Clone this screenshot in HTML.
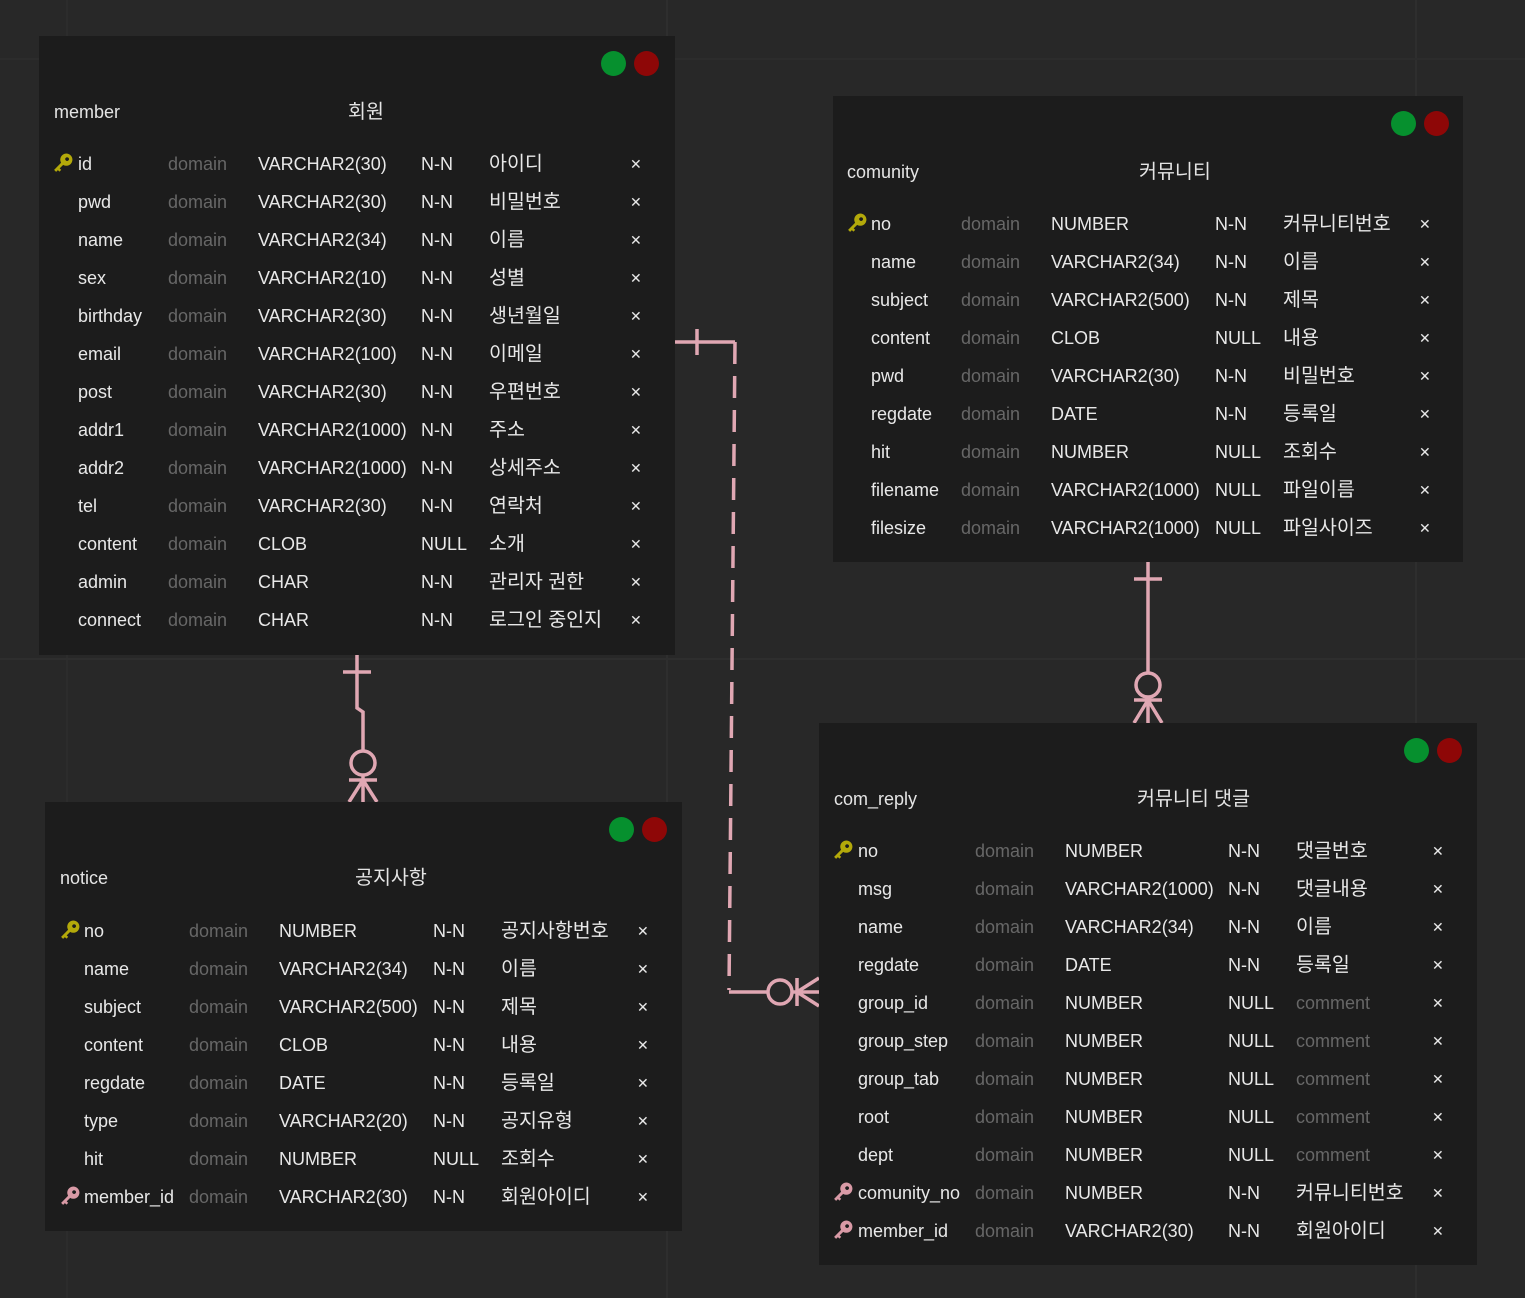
<!DOCTYPE html>
<html><head><meta charset="utf-8"><style>
body{margin:0;width:1525px;height:1298px;overflow:hidden;background:#282828;font-family:"Liberation Sans","Noto Sans CJK KR",sans-serif;position:relative}
.gv{position:absolute;top:0;bottom:0;width:2px;background:#2e2e2e}
.gh{position:absolute;left:0;right:0;height:2px;background:#2e2e2e}
.t{position:absolute;background:#1c1c1c}
.d{position:absolute;top:15px;width:25px;height:25px;border-radius:50%}
.g{background:#06902e}.rd{background:#8e0707}
.tn{position:absolute;top:65px;font-size:18px;color:#e4e4e4;line-height:22px}
.tk{font-size:19.5px}
.r{position:absolute;left:0;right:0;height:22px;font-size:18px;line-height:22px;color:#e8e8e8;white-space:nowrap}
.r span{position:absolute;top:1px}
.c2{color:#676767}
.c5{font-size:19.5px}
.c5.p{color:#676767;font-size:18px}
.c6{font-size:14px}
.k{top:1px!important;width:20px;height:20px}
.m .c0{left:14px}.m .c1{left:39px}.m .c2{left:129px}.m .c3{left:219px}.m .c4{left:382px}.m .c5{left:450px}.m .c6{left:591px}
.cm .c0{left:14px}.cm .c1{left:38px}.cm .c2{left:128px}.cm .c3{left:218px}.cm .c4{left:382px}.cm .c5{left:450px}.cm .c6{left:586px}
.n .c0{left:15px}.n .c1{left:39px}.n .c2{left:144px}.n .c3{left:234px}.n .c4{left:388px}.n .c5{left:456px}.n .c6{left:592px}
.cr .c0{left:14px}.cr .c1{left:39px}.cr .c2{left:156px}.cr .c3{left:246px}.cr .c4{left:409px}.cr .c5{left:477px}.cr .c6{left:613px}
</style></head><body>
<div class="gv" style="left:66px;background:#2c2c2c"></div>
<div class="gv" style="left:666px"></div>
<div class="gv" style="left:1415px"></div>
<div class="gh" style="top:58px;background:#2c2c2c"></div>
<div class="gh" style="top:658px"></div>
<svg width="0" height="0" style="position:absolute"><defs>
<symbol id="key" viewBox="0 0 18 18"><path d="M12 0.5a5.5 5.5 0 1 0 0.01 0zM12.7 3.8a1.7 1.7 0 1 1 -0.01 0z" fill-rule="evenodd"/><path d="M8.3 7.8 L1 15.2 L2.8 17 L4.4 15.4 L5.8 16.8 L7.4 15.2 L6 13.8 L10.2 9.7Z"/></symbol>
</defs></svg>

<svg style="position:absolute;left:0;top:0" width="1525" height="1298">
<g stroke="#e0a7b3" stroke-width="3.5" fill="none">
<path d="M675 342H735"/><path d="M697 329V355"/>
<path d="M735 342L729 990" stroke-dasharray="22 12"/>
<path d="M729 992H768"/>
<circle cx="780" cy="992" r="12"/>
<path d="M797 978V1006M792 992H819M797 992L819 978M797 992L819 1006"/>
<path d="M357 655V708L363 712V751"/><path d="M343 672H371"/>
<circle cx="363" cy="763" r="12"/>
<path d="M349 780H377M363 775V802M363 780L349 802M363 780L377 802"/>
<path d="M1148 562V673"/><path d="M1134 579H1162"/>
<circle cx="1148" cy="685" r="12"/>
<path d="M1134 700H1162M1148 697V723M1148 700L1134 723M1148 700L1162 723"/>
</g></svg>

<div class="t m" style="left:39px;top:36px;width:636px;height:619px">
<div class="d g" style="left:562px"></div><div class="d rd" style="left:595px"></div>
<div class="tn" style="left:15px">member</div><div class="tn tk" style="left:309px">회원</div>
<div class="r" style="top:116px"><svg class="k c0" style="position:absolute;fill:#b3a90a"><use href="#key"/></svg><span class="c1">id</span><span class="c2">domain</span><span class="c3">VARCHAR2(30)</span><span class="c4">N-N</span><span class="c5">아이디</span><span class="c6">✕</span></div>
<div class="r" style="top:154px"><span class="c1">pwd</span><span class="c2">domain</span><span class="c3">VARCHAR2(30)</span><span class="c4">N-N</span><span class="c5">비밀번호</span><span class="c6">✕</span></div>
<div class="r" style="top:192px"><span class="c1">name</span><span class="c2">domain</span><span class="c3">VARCHAR2(34)</span><span class="c4">N-N</span><span class="c5">이름</span><span class="c6">✕</span></div>
<div class="r" style="top:230px"><span class="c1">sex</span><span class="c2">domain</span><span class="c3">VARCHAR2(10)</span><span class="c4">N-N</span><span class="c5">성별</span><span class="c6">✕</span></div>
<div class="r" style="top:268px"><span class="c1">birthday</span><span class="c2">domain</span><span class="c3">VARCHAR2(30)</span><span class="c4">N-N</span><span class="c5">생년월일</span><span class="c6">✕</span></div>
<div class="r" style="top:306px"><span class="c1">email</span><span class="c2">domain</span><span class="c3">VARCHAR2(100)</span><span class="c4">N-N</span><span class="c5">이메일</span><span class="c6">✕</span></div>
<div class="r" style="top:344px"><span class="c1">post</span><span class="c2">domain</span><span class="c3">VARCHAR2(30)</span><span class="c4">N-N</span><span class="c5">우편번호</span><span class="c6">✕</span></div>
<div class="r" style="top:382px"><span class="c1">addr1</span><span class="c2">domain</span><span class="c3">VARCHAR2(1000)</span><span class="c4">N-N</span><span class="c5">주소</span><span class="c6">✕</span></div>
<div class="r" style="top:420px"><span class="c1">addr2</span><span class="c2">domain</span><span class="c3">VARCHAR2(1000)</span><span class="c4">N-N</span><span class="c5">상세주소</span><span class="c6">✕</span></div>
<div class="r" style="top:458px"><span class="c1">tel</span><span class="c2">domain</span><span class="c3">VARCHAR2(30)</span><span class="c4">N-N</span><span class="c5">연락처</span><span class="c6">✕</span></div>
<div class="r" style="top:496px"><span class="c1">content</span><span class="c2">domain</span><span class="c3">CLOB</span><span class="c4">NULL</span><span class="c5">소개</span><span class="c6">✕</span></div>
<div class="r" style="top:534px"><span class="c1">admin</span><span class="c2">domain</span><span class="c3">CHAR</span><span class="c4">N-N</span><span class="c5">관리자 권한</span><span class="c6">✕</span></div>
<div class="r" style="top:572px"><span class="c1">connect</span><span class="c2">domain</span><span class="c3">CHAR</span><span class="c4">N-N</span><span class="c5">로그인 중인지</span><span class="c6">✕</span></div>
</div>

<div class="t cm" style="left:833px;top:96px;width:630px;height:466px">
<div class="d g" style="left:558px"></div><div class="d rd" style="left:591px"></div>
<div class="tn" style="left:14px">comunity</div><div class="tn tk" style="left:306px">커뮤니티</div>
<div class="r" style="top:116px"><svg class="k c0" style="position:absolute;fill:#b3a90a"><use href="#key"/></svg><span class="c1">no</span><span class="c2">domain</span><span class="c3">NUMBER</span><span class="c4">N-N</span><span class="c5">커뮤니티번호</span><span class="c6">✕</span></div>
<div class="r" style="top:154px"><span class="c1">name</span><span class="c2">domain</span><span class="c3">VARCHAR2(34)</span><span class="c4">N-N</span><span class="c5">이름</span><span class="c6">✕</span></div>
<div class="r" style="top:192px"><span class="c1">subject</span><span class="c2">domain</span><span class="c3">VARCHAR2(500)</span><span class="c4">N-N</span><span class="c5">제목</span><span class="c6">✕</span></div>
<div class="r" style="top:230px"><span class="c1">content</span><span class="c2">domain</span><span class="c3">CLOB</span><span class="c4">NULL</span><span class="c5">내용</span><span class="c6">✕</span></div>
<div class="r" style="top:268px"><span class="c1">pwd</span><span class="c2">domain</span><span class="c3">VARCHAR2(30)</span><span class="c4">N-N</span><span class="c5">비밀번호</span><span class="c6">✕</span></div>
<div class="r" style="top:306px"><span class="c1">regdate</span><span class="c2">domain</span><span class="c3">DATE</span><span class="c4">N-N</span><span class="c5">등록일</span><span class="c6">✕</span></div>
<div class="r" style="top:344px"><span class="c1">hit</span><span class="c2">domain</span><span class="c3">NUMBER</span><span class="c4">NULL</span><span class="c5">조회수</span><span class="c6">✕</span></div>
<div class="r" style="top:382px"><span class="c1">filename</span><span class="c2">domain</span><span class="c3">VARCHAR2(1000)</span><span class="c4">NULL</span><span class="c5">파일이름</span><span class="c6">✕</span></div>
<div class="r" style="top:420px"><span class="c1">filesize</span><span class="c2">domain</span><span class="c3">VARCHAR2(1000)</span><span class="c4">NULL</span><span class="c5">파일사이즈</span><span class="c6">✕</span></div>
</div>

<div class="t n" style="left:45px;top:802px;width:637px;height:429px">
<div class="d g" style="left:564px"></div><div class="d rd" style="left:597px"></div>
<div class="tn" style="left:15px">notice</div><div class="tn tk" style="left:310px">공지사항</div>
<div class="r" style="top:117px"><svg class="k c0" style="position:absolute;fill:#b3a90a"><use href="#key"/></svg><span class="c1">no</span><span class="c2">domain</span><span class="c3">NUMBER</span><span class="c4">N-N</span><span class="c5">공지사항번호</span><span class="c6">✕</span></div>
<div class="r" style="top:155px"><span class="c1">name</span><span class="c2">domain</span><span class="c3">VARCHAR2(34)</span><span class="c4">N-N</span><span class="c5">이름</span><span class="c6">✕</span></div>
<div class="r" style="top:193px"><span class="c1">subject</span><span class="c2">domain</span><span class="c3">VARCHAR2(500)</span><span class="c4">N-N</span><span class="c5">제목</span><span class="c6">✕</span></div>
<div class="r" style="top:231px"><span class="c1">content</span><span class="c2">domain</span><span class="c3">CLOB</span><span class="c4">N-N</span><span class="c5">내용</span><span class="c6">✕</span></div>
<div class="r" style="top:269px"><span class="c1">regdate</span><span class="c2">domain</span><span class="c3">DATE</span><span class="c4">N-N</span><span class="c5">등록일</span><span class="c6">✕</span></div>
<div class="r" style="top:307px"><span class="c1">type</span><span class="c2">domain</span><span class="c3">VARCHAR2(20)</span><span class="c4">N-N</span><span class="c5">공지유형</span><span class="c6">✕</span></div>
<div class="r" style="top:345px"><span class="c1">hit</span><span class="c2">domain</span><span class="c3">NUMBER</span><span class="c4">NULL</span><span class="c5">조회수</span><span class="c6">✕</span></div>
<div class="r" style="top:383px"><svg class="k c0" style="position:absolute;fill:#d99aa6"><use href="#key"/></svg><span class="c1">member_id</span><span class="c2">domain</span><span class="c3">VARCHAR2(30)</span><span class="c4">N-N</span><span class="c5">회원아이디</span><span class="c6">✕</span></div>
</div>

<div class="t cr" style="left:819px;top:723px;width:658px;height:542px">
<div class="d g" style="left:585px"></div><div class="d rd" style="left:618px"></div>
<div class="tn" style="left:15px">com_reply</div><div class="tn tk" style="left:318px">커뮤니티 댓글</div>
<div class="r" style="top:116px"><svg class="k c0" style="position:absolute;fill:#b3a90a"><use href="#key"/></svg><span class="c1">no</span><span class="c2">domain</span><span class="c3">NUMBER</span><span class="c4">N-N</span><span class="c5">댓글번호</span><span class="c6">✕</span></div>
<div class="r" style="top:154px"><span class="c1">msg</span><span class="c2">domain</span><span class="c3">VARCHAR2(1000)</span><span class="c4">N-N</span><span class="c5">댓글내용</span><span class="c6">✕</span></div>
<div class="r" style="top:192px"><span class="c1">name</span><span class="c2">domain</span><span class="c3">VARCHAR2(34)</span><span class="c4">N-N</span><span class="c5">이름</span><span class="c6">✕</span></div>
<div class="r" style="top:230px"><span class="c1">regdate</span><span class="c2">domain</span><span class="c3">DATE</span><span class="c4">N-N</span><span class="c5">등록일</span><span class="c6">✕</span></div>
<div class="r" style="top:268px"><span class="c1">group_id</span><span class="c2">domain</span><span class="c3">NUMBER</span><span class="c4">NULL</span><span class="c5 p">comment</span><span class="c6">✕</span></div>
<div class="r" style="top:306px"><span class="c1">group_step</span><span class="c2">domain</span><span class="c3">NUMBER</span><span class="c4">NULL</span><span class="c5 p">comment</span><span class="c6">✕</span></div>
<div class="r" style="top:344px"><span class="c1">group_tab</span><span class="c2">domain</span><span class="c3">NUMBER</span><span class="c4">NULL</span><span class="c5 p">comment</span><span class="c6">✕</span></div>
<div class="r" style="top:382px"><span class="c1">root</span><span class="c2">domain</span><span class="c3">NUMBER</span><span class="c4">NULL</span><span class="c5 p">comment</span><span class="c6">✕</span></div>
<div class="r" style="top:420px"><span class="c1">dept</span><span class="c2">domain</span><span class="c3">NUMBER</span><span class="c4">NULL</span><span class="c5 p">comment</span><span class="c6">✕</span></div>
<div class="r" style="top:458px"><svg class="k c0" style="position:absolute;fill:#d99aa6"><use href="#key"/></svg><span class="c1">comunity_no</span><span class="c2">domain</span><span class="c3">NUMBER</span><span class="c4">N-N</span><span class="c5">커뮤니티번호</span><span class="c6">✕</span></div>
<div class="r" style="top:496px"><svg class="k c0" style="position:absolute;fill:#d99aa6"><use href="#key"/></svg><span class="c1">member_id</span><span class="c2">domain</span><span class="c3">VARCHAR2(30)</span><span class="c4">N-N</span><span class="c5">회원아이디</span><span class="c6">✕</span></div>
</div>
</body></html>
